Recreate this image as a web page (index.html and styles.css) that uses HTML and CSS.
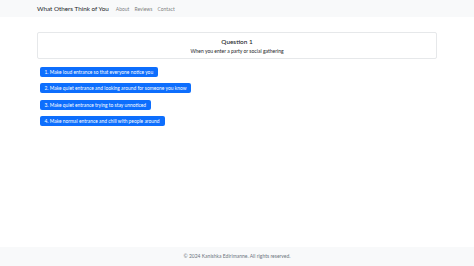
FILE: index.html
```html
<!DOCTYPE html>
<html lang="en">
<head>
<meta charset="utf-8">
<title>What Others Think of You</title>
<link rel="stylesheet" href="styles.css">
</head>
<body>
<div class="page">
  <nav class="navbar">
    <div class="container nav-inner">
      <span class="brand">What Others Think of You</span>
      <a class="nav-link" href="#">About</a>
      <a class="nav-link" href="#">Reviews</a>
      <a class="nav-link" href="#">Contact</a>
    </div>
  </nav>
  <main class="container main">
    <div class="card">
      <h2 class="q-title">Question 1</h2>
      <p class="q-sub">When you enter a party or social gathering</p>
    </div>
    <div class="answers">
      <button class="btn">1. Make loud entrance so that everyone notice you</button>
      <button class="btn">2. Make quiet entrance and looking around for someone you know</button>
      <button class="btn">3. Make quiet entrance trying to stay unnoticed</button>
      <button class="btn">4. Make normal entrance and chill with people around</button>
    </div>
  </main>
  <footer class="footer">© 2024 Kanishka Edirimanne. All rights reserved.</footer>
</div>
</body>
</html>
```
FILE: styles.css
```css
* { box-sizing: border-box; }
html, body { margin: 0; padding: 0; }
body {
  font-family: "Lato", "Liberation Sans", sans-serif;
  color: #212529;
  background: #fff;
}
.page {
  min-height: 266px;
  display: flex;
  flex-direction: column;
}
.container {
  width: 400px;
  margin: 0 auto;
}
.navbar {
  background: #f8f9fa;
  height: 17px;
}
.nav-inner {
  display: flex;
  align-items: center;
  height: 17px;
}
.brand {
  font-size: 6.3px;
  color: #212529;
  margin-right: 7px;
}
.nav-link {
  font-size: 5px;
  color: rgba(0,0,0,0.55);
  text-decoration: none;
  margin-right: 5px;
}
.main {
  padding-top: 15px;
}
.card {
  border: 1px solid #e6e8ea;
  border-radius: 2px;
  height: 27px;
  text-align: center;
  padding-top: 4px;
}
.q-title {
  margin: 0;
  font-size: 6.4px;
  font-weight: 500;
  line-height: 9px;
}
.q-sub {
  margin: 2px 0 0;
  font-size: 5px;
  line-height: 7px;
}
.answers {
  display: flex;
  flex-direction: column;
  align-items: flex-start;
  gap: 6.5px;
  padding: 7.5px 0 0 2.5px;
}
.btn {
  font-family: inherit;
  background: #0d6efd;
  color: #fff;
  border: none;
  border-radius: 2px;
  height: 10px;
  padding: 0 5px;
  font-size: 4.9px;
  line-height: 10px;
}
.footer {
  margin-top: auto;
  background: #f8f9fa;
  height: 19px;
  line-height: 19px;
  text-align: center;
  font-size: 5px;
  color: #6c757d;
}
```
